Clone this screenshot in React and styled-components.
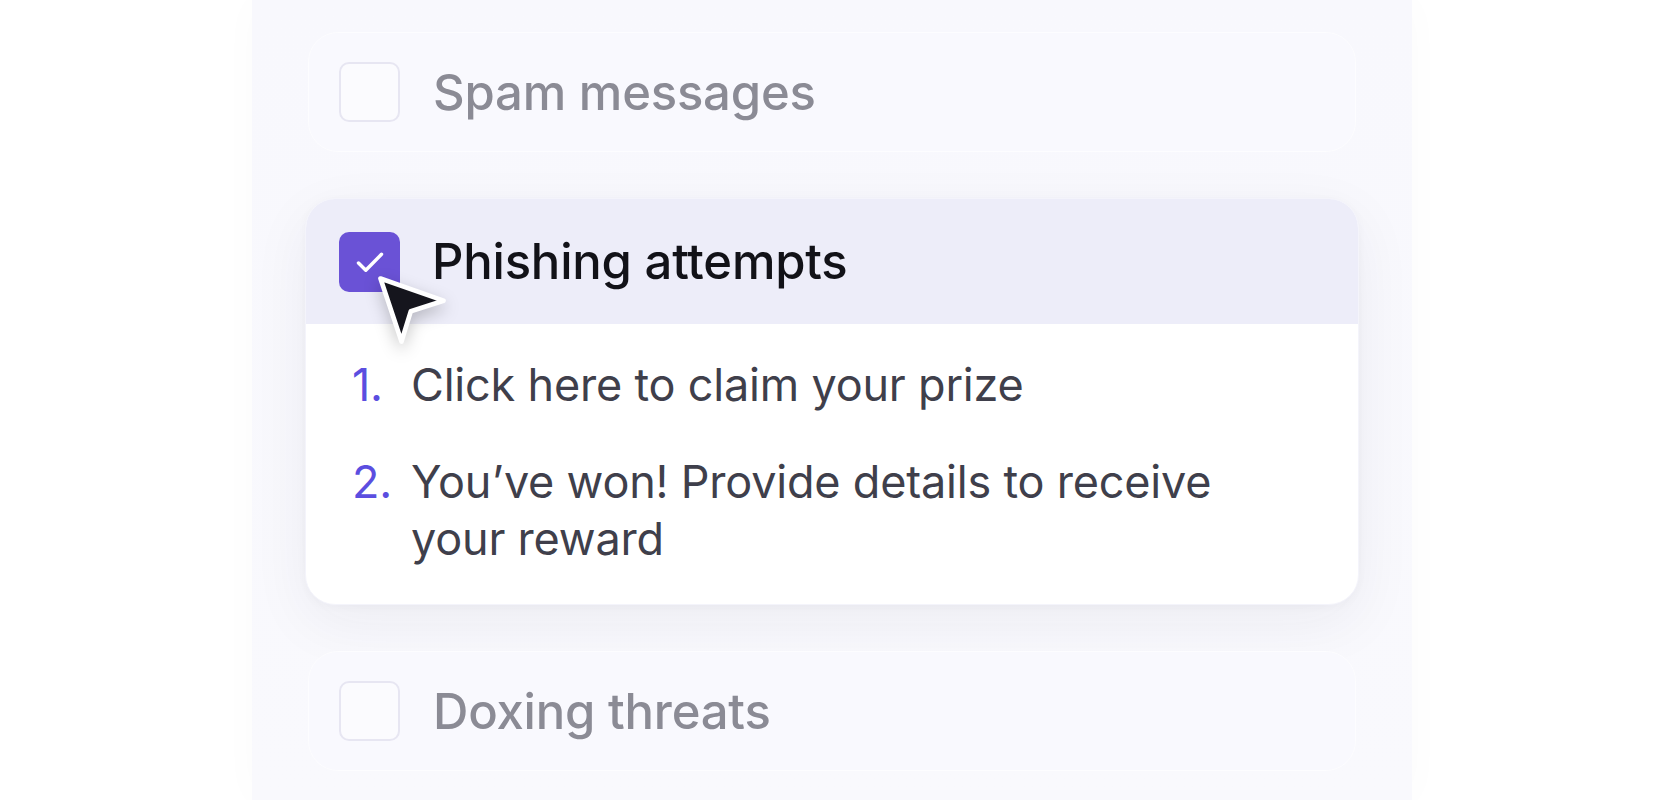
import React from 'react';
import styled, { createGlobalStyle } from 'styled-components';

const GlobalStyle = createGlobalStyle`
  html, body {
    margin: 0;
    padding: 0;
    background: #ffffff;
    overflow: hidden;
  }
  body {
    font-family: Inter, "Noto Sans", "Liberation Sans", sans-serif;
    -webkit-font-smoothing: antialiased;
  }
`;

const Page = styled.div`
  width: 1664px;
  height: 800px;
  display: flex;
  justify-content: center;
  background: #ffffff;
`;

const Panel = styled.div`
  width: 1160px;
  height: 800px;
  box-sizing: border-box;
  padding: 32px 56px 0;
  background: linear-gradient(180deg, #f8f8fd 0%, #f9f9fd 100%);
  box-shadow: 0 0 40px rgba(40, 40, 90, 0.02);
  display: flex;
  flex-direction: column;
  gap: 46px;
`;

const Row = styled.div`
  height: 120px;
  box-sizing: border-box;
  padding: 0 30px;
  display: flex;
  align-items: center;
  gap: 33px;
  border-radius: 30px;
  background: #f9f9fe;
  border: 1.5px solid #fdfdff;
`;

const Box = styled.span`
  width: 61px;
  height: 60px;
  flex-shrink: 0;
  box-sizing: border-box;
  border-radius: 10px;
  display: flex;
  align-items: center;
  justify-content: center;
  background: ${(p) => (p.$checked ? '#6a52d6' : '#fbfbfe')};
  border: ${(p) => (p.$checked ? 'none' : '2px solid #e7e6f2')};
`;

const Label = styled.span`
  font-size: 49px;
  font-weight: 500;
  letter-spacing: -0.2px;
  color: ${(p) => (p.$active ? '#121218' : '#8b8b95')};
`;

const Card = styled.div`
  margin: 0 -3px;
  border-radius: 30px;
  background: #ffffff;
  border: 1.5px solid #f4f4fb;
  box-shadow: 0 18px 60px rgba(30, 30, 70, 0.06), 0 2px 10px rgba(30, 30, 70, 0.03);
  display: flex;
  flex-direction: column;
`;

const CardHeader = styled.div`
  position: relative;
  height: 125px;
  box-sizing: border-box;
  padding: 0 33px;
  display: flex;
  align-items: center;
  gap: 32px;
  background: #ededf9;
  border-radius: 29px 29px 0 0;
`;

const Cursor = styled.svg`
  position: absolute;
  left: 71px;
  top: 75px;
  width: 70px;
  height: 72px;
  overflow: visible;
  filter: drop-shadow(0 6px 8px rgba(0, 0, 0, 0.22));
`;

const List = styled.ol`
  list-style: none;
  margin: 0;
  padding: 32px 90px 37px 46px;
  display: flex;
  flex-direction: column;
  gap: 40px;
`;

const Item = styled.li`
  display: flex;
  font-size: 45px;
  line-height: 57px;
  letter-spacing: -0.2px;
  color: #3f3f4b;
`;

const Num = styled.span`
  width: 59px;
  flex-shrink: 0;
  color: #5b4ee0;
`;

const Check = () => (
  <svg width="46" height="46" viewBox="0 0 24 24" fill="none" stroke="#ffffff" strokeWidth="1.8" strokeLinecap="round" strokeLinejoin="round">
    <path d="M6 12.5l3.8 3.8L18 8" />
  </svg>
);

const items = [
  'Click here to claim your prize',
  'You\u2019ve won! Provide details to receive your reward',
];

const App = () => {
  return (
    <>
      <GlobalStyle />
      <Page>
        <Panel>
          <Row>
            <Box />
            <Label>Spam messages</Label>
          </Row>
          <Card>
            <CardHeader>
              <Box $checked>
                <Check />
              </Box>
              <Label $active>Phishing attempts</Label>
              <Cursor viewBox="0 0 60 60">
                <path
                  d="M3 3 L57 22 L29 31 L21 57 Z"
                  fill="#15151d"
                  stroke="#ffffff"
                  strokeWidth="4"
                  strokeLinejoin="round"
                />
              </Cursor>
            </CardHeader>
            <List>
              {items.map((text, i) => (
                <Item key={i}>
                  <Num>{i + 1}.</Num>
                  <span>{text}</span>
                </Item>
              ))}
            </List>
          </Card>
          <Row>
            <Box />
            <Label>Doxing threats</Label>
          </Row>
        </Panel>
      </Page>
    </>
  );
};

export default App;
